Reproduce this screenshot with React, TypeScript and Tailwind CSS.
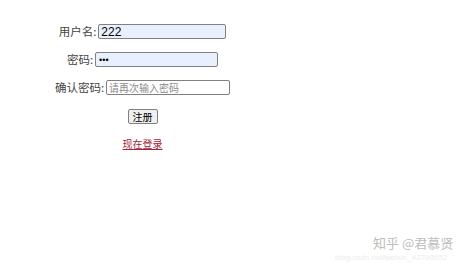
import React from "react";

export default function App() {
  const font = { fontFamily: '"Noto Sans CJK SC", "Liberation Sans", sans-serif' };
  return (
    <div className="w-[474px] h-[269px] bg-white relative overflow-hidden" style={font}>
      <div className="w-[285px] flex flex-col items-center pt-[24px]">
        <div className="flex items-center h-[15px]">
          <span className="text-[11.5px] text-[#444] leading-none mr-[2px]">用户名:</span>
          <input
            readOnly
            value="222"
            className="w-[128px] h-[15px] border border-[#808080] rounded-[2px] bg-[#e8f0fe] text-[12px] text-black px-[2px] outline-none"
            style={{ fontFamily: '"Liberation Sans", sans-serif' }}
          />
        </div>
        <div className="flex items-center h-[15px] mt-[13px]">
          <span className="text-[11.5px] text-[#444] leading-none mr-[2px]">密码:</span>
          <input
            readOnly
            type="password"
            value="222"
            className="w-[123px] h-[15px] border border-[#808080] rounded-[2px] bg-[#e8f0fe] text-[9px] tracking-[0px] text-black px-[3px] outline-none"
            style={{ fontFamily: '"Liberation Sans", sans-serif' }}
          />
        </div>
        <div className="flex items-center h-[15px] mt-[13px]">
          <span className="text-[11.5px] text-[#444] leading-none mr-[2px]">确认密码:</span>
          <input
            readOnly
            placeholder="请再次输入密码"
            className="w-[124px] h-[15px] border border-[#808080] rounded-[2px] bg-white text-[10px] text-black px-[2px] outline-none placeholder:text-[#8a8a8a]"
          />
        </div>
        <button className="mt-[14px] w-[30px] h-[15px] border border-[#808080] rounded-[2px] bg-[#efefef] text-[10px] text-black leading-none flex items-center justify-center">
          注册
        </button>
        <a className="mt-[15px] text-[10px] text-[#a3243b] underline leading-none">现在登录</a>
      </div>
      <div className="absolute left-[373px] top-[236px] text-[13px] text-[#bdbdbd] leading-none">知乎 @君慕贤</div>
      <div className="absolute left-[335px] top-[254px] text-[8px] text-[#ececec] leading-none" style={{ fontFamily: '"Liberation Sans", sans-serif' }}>
        blog.csdn.net/weixin_43799652
      </div>
    </div>
  );
}
